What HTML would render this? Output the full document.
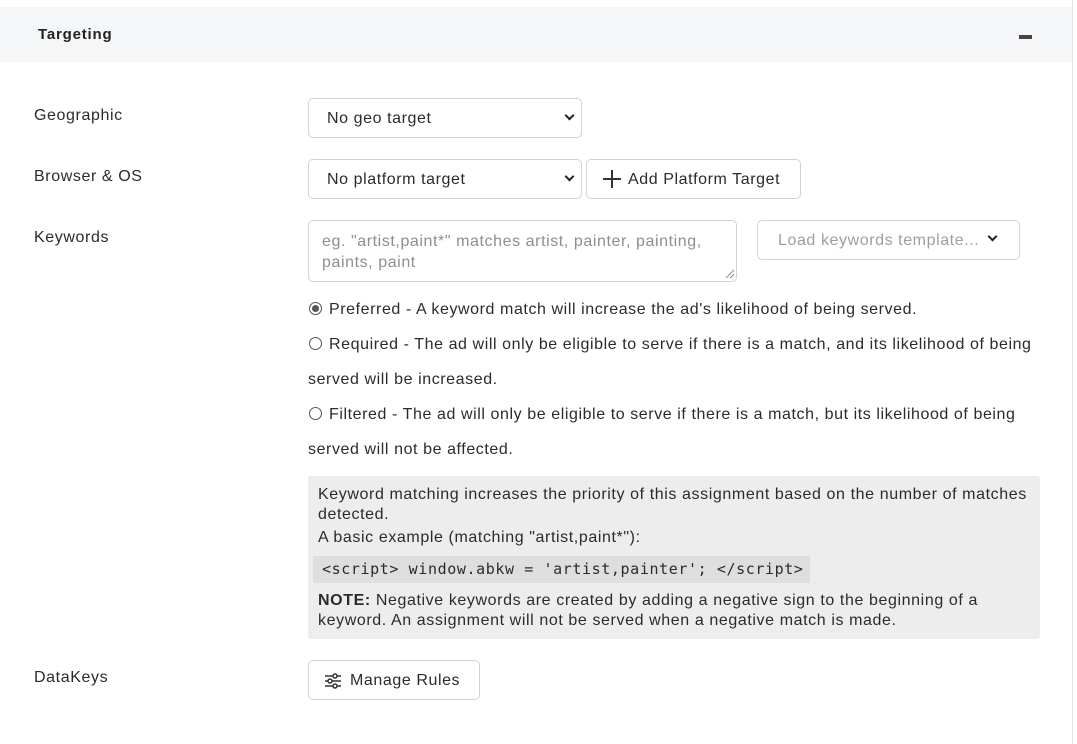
<!DOCTYPE html>
<html><head><style>
body{margin:0;width:1077px;height:744px;background:#fff;font-family:"Liberation Sans",sans-serif;color:#2b2b2b;position:relative;overflow:hidden}
.a{position:absolute;white-space:nowrap}
.hdr{position:absolute;left:0;top:7px;width:1072px;height:55px;background:#f5f6f8}
.vl{position:absolute;left:1072px;top:0;width:1px;height:744px;background:#e2e4e8}
.lbl{font-size:16px;letter-spacing:0.6px;color:#2b2b2b}
.box{position:absolute;border:1px solid #cfd3da;border-radius:5px;background:#fff;box-sizing:border-box}
.t{font-size:16px;letter-spacing:0.58px}
.chev{position:absolute;width:5px;height:5px;border-right:2px solid #222;border-bottom:2px solid #222;transform:rotate(45deg)}
.radio{position:absolute;width:11px;height:11px;border:1px solid #555;border-radius:50%}
.s{font-size:16px;letter-spacing:0.6px;line-height:20px}
</style></head><body>
<div class="hdr"></div>
<div class="vl"></div>
<div class="a" style="left:38px;top:26px;font-size:15px;font-weight:bold;color:#222;letter-spacing:0.8px">Targeting</div>
<div class="a" style="left:1019px;top:35px;width:13px;height:4px;background:#444"></div>

<div class="a lbl" style="left:34px;top:107px">Geographic</div>
<div class="a lbl" style="left:34px;top:168px">Browser &amp; OS</div>
<div class="a lbl" style="left:34px;top:229px">Keywords</div>
<div class="a lbl" style="left:34px;top:669px">DataKeys</div>

<div class="box" style="left:308px;top:98px;width:274px;height:40px"><span class="a t" style="left:18px;top:11px">No geo target</span><span class="chev" style="left:257px;top:13px"></span></div>
<div class="box" style="left:308px;top:159px;width:274px;height:40px"><span class="a t" style="left:18px;top:11px">No platform target</span><span class="chev" style="left:257px;top:13px"></span></div>
<div class="box" style="left:586px;top:159px;width:215px;height:40px">
<span class="a" style="left:16px;top:18px;width:18px;height:2px;background:#333"></span>
<span class="a" style="left:24px;top:10px;width:2px;height:18px;background:#333"></span>
<span class="a t" style="left:41px;top:11px">Add Platform Target</span></div>

<div class="box" style="left:308px;top:220px;width:429px;height:62px"><span class="a t" style="left:13px;top:10px;color:#8a8f96;line-height:21px;white-space:normal;width:405px">eg. "artist,paint*" matches artist, painter, painting, paints, paint</span>
<svg class="a" style="left:416px;top:48px" width="10" height="10"><path d="M1 9L9 1M5 9L9 5" stroke="#888"/></svg></div>
<div class="box" style="left:757px;top:220px;width:263px;height:40px"><span class="a t" style="left:20px;top:11px;color:#9a9ea5">Load keywords template...</span><span class="chev" style="left:231px;top:12px"></span></div>

<div class="radio" style="left:309px;top:302px"><div style="position:absolute;left:2px;top:2px;width:7px;height:7px;border-radius:50%;background:#555"></div></div>
<div class="a t" style="left:329px;top:301px">Preferred - A keyword match will increase the ad's likelihood of being served.</div>
<div class="radio" style="left:309px;top:337px"></div>
<div class="a t" style="left:329px;top:336px">Required - The ad will only be eligible to serve if there is a match, and its likelihood of being</div>
<div class="a t" style="left:308px;top:371px">served will be increased.</div>
<div class="radio" style="left:309px;top:407px"></div>
<div class="a t" style="left:329px;top:406px">Filtered - The ad will only be eligible to serve if there is a match, but its likelihood of being</div>
<div class="a t" style="left:308px;top:441px">served will not be affected.</div>

<div class="a" style="left:308px;top:476px;width:732px;height:163px;background:#ededed;border-radius:3px"></div>
<div class="a s" style="left:318px;top:485px">Keyword matching increases the priority of this assignment based on the number of matches<br>detected.</div>
<div class="a s" style="left:318px;top:528px">A basic example (matching "artist,paint*"):</div>
<div class="a" style="left:313px;top:556px;width:497px;height:27px;background:#dedede"></div>
<div class="a" style="left:322px;top:560px;font-family:'DejaVu Sans Mono','Liberation Mono',monospace;font-size:15px;letter-spacing:0.6px">&lt;script&gt; window.abkw = 'artist,painter'; &lt;/script&gt;</div>
<div class="a s" style="left:318px;top:591px"><b>NOTE:</b> Negative keywords are created by adding a negative sign to the beginning of a<br>keyword. An assignment will not be served when a negative match is made.</div>

<div class="box" style="left:308px;top:660px;width:172px;height:40px">
<svg class="a" style="left:15px;top:11px" width="18" height="18" fill="none" stroke="#333" stroke-width="1.5"><path d="M1 4H17M1 9H17M1 14H17"/><circle cx="11" cy="4" r="2" fill="#fff"/><circle cx="6" cy="9" r="2" fill="#fff"/><circle cx="11" cy="14" r="2" fill="#fff"/></svg>
<span class="a t" style="left:41px;top:11px">Manage Rules</span></div>
</body></html>
